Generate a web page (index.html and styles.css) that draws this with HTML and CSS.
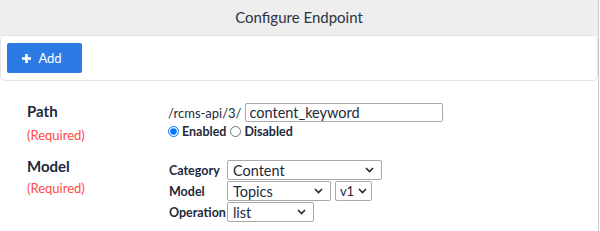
FILE: index.html
```html
<!DOCTYPE html>
<html lang="en">
<head>
<meta charset="UTF-8">
<title>Configure Endpoint</title>
<link rel="stylesheet" href="styles.css">
</head>
<body>

<div class="panel">
    <div class="panel-header">Configure Endpoint</div>

    <div class="toolbar">
        <button class="btn-add">
            <svg width="11" height="11" viewBox="0 0 11 11"><path d="M5.5 1v9M1 5.5h9" stroke="#fff" stroke-width="2.6"/></svg>
            Add
        </button>
    </div>

    <div class="form">
        <div class="form-row row-path">
            <div class="field-label">
                <div class="label-title">Path</div>
                <div class="label-required">(Required)</div>
            </div>
            <div class="field-body">
                <div class="path-line">
                    <span class="path-prefix">/rcms-api/3/</span>
                    <input class="text-input" type="text" value="content_keyword">
                </div>
                <div class="radio-line">
                    <label><input type="radio" name="status" checked> Enabled</label>
                    <label><input type="radio" name="status"> Disabled</label>
                </div>
            </div>
        </div>

        <div class="form-row row-model">
            <div class="field-label">
                <div class="label-title">Model</div>
                <div class="label-required">(Required)</div>
            </div>
            <div class="field-body">
                <table class="model-table">
                    <tr>
                        <th>Category</th>
                        <td>
                            <div class="select-wrap w-category">
                                <select><option>Content</option></select>
                                <svg class="chevron" width="9" height="6" viewBox="0 0 9 6"><path d="M1 1l3.5 3.5L8 1" fill="none" stroke="#1e2a3b" stroke-width="1.6"/></svg>
                            </div>
                        </td>
                    </tr>
                    <tr>
                        <th>Model</th>
                        <td>
                            <div class="select-wrap w-model">
                                <select><option>Topics</option></select>
                                <svg class="chevron" width="9" height="6" viewBox="0 0 9 6"><path d="M1 1l3.5 3.5L8 1" fill="none" stroke="#1e2a3b" stroke-width="1.6"/></svg>
                            </div>
                            <div class="select-wrap w-version">
                                <select><option>v1</option></select>
                                <svg class="chevron" width="9" height="6" viewBox="0 0 9 6"><path d="M1 1l3.5 3.5L8 1" fill="none" stroke="#1e2a3b" stroke-width="1.6"/></svg>
                            </div>
                        </td>
                    </tr>
                    <tr>
                        <th>Operation</th>
                        <td>
                            <div class="select-wrap w-operation">
                                <select><option>list</option></select>
                                <svg class="chevron" width="9" height="6" viewBox="0 0 9 6"><path d="M1 1l3.5 3.5L8 1" fill="none" stroke="#1e2a3b" stroke-width="1.6"/></svg>
                            </div>
                        </td>
                    </tr>
                </table>
            </div>
        </div>
    </div>
</div>

</body>
</html>
```

FILE: styles.css
```css
html {
    box-sizing: border-box;
}

*, *:before, *:after {
    box-sizing: inherit;
}

body {
    margin: 0;
    background: #fff;
    color: #1e2a3b;
    font: 13px 'Lato', sans-serif;
}

.panel {
    width: 599px;
    height: 231px;
    border-right: 1px solid #c9c9c9;
}

.panel-header {
    height: 36px;
    background: #eeeeee;
    text-align: center;
    line-height: 35px;
    font-size: 15px;
    color: #2b3344;
}

.toolbar {
    margin-top: -1px;
    height: 46px;
    border: 1px solid #e4e4e4;
    border-radius: 5px;
    background: #fff;
    padding: 7px 6px;
}

.btn-add {
    display: flex;
    align-items: center;
    justify-content: center;
    gap: 6px;
    width: 75px;
    height: 30px;
    border: none;
    border-radius: 2px;
    background: #2c7be5;
    color: #fff;
    font: 13px 'Lato', sans-serif;
    padding: 0 6px 0 0;
}

.form {
    padding: 19px 0 0 27px;
}

.form-row {
    display: flex;
}

.field-label {
    width: 141px;
}

.label-title {
    font-size: 15px;
    font-weight: bold;
    line-height: 18px;
}

.label-required {
    margin-top: 7px;
    font-size: 13px;
    color: #ff4a4a;
}

.row-path .field-label {
    padding-top: 2px;
}

.path-line {
    display: flex;
    align-items: center;
    height: 22px;
    padding-top: 3px;
}

.path-prefix {
    font-size: 13px;
    margin-right: 3px;
}

.text-input {
    width: 198px;
    height: 19px;
    border: 1px solid #a9a9a9;
    border-radius: 2px;
    padding: 0 4px;
    font: 14.5px 'Lato', sans-serif;
    color: #1e2a3b;
}

.radio-line {
    display: flex;
    height: 16px;
    align-items: center;
    margin-top: 1px;
    font-weight: bold;
    font-size: 12.5px;
}

.radio-line label {
    display: flex;
    align-items: center;
}

.radio-line input {
    margin: 0 3px 0 0;
    width: 11px;
    height: 11px;
}

.radio-line label + label {
    margin-left: 4px;
}

.row-model {
    margin-top: 14px;
}

.row-model .label-required {
    margin-top: 5px;
}

.row-model .field-body {
    padding-top: 3px;
}

.model-table {
    border-collapse: collapse;
    margin-left: 1px;
}

.model-table th {
    text-align: left;
    font-weight: bold;
    font-size: 12.5px;
    padding: 0 1px 1px 0;
    white-space: nowrap;
}

.model-table td {
    padding: 0 0 1px 0;
    display: flex;
    gap: 4px;
}

.select-wrap {
    position: relative;
    height: 20px;
}

.select-wrap select {
    appearance: none;
    -webkit-appearance: none;
    width: 100%;
    height: 20px;
    border: 1px solid #a9a9a9;
    border-radius: 2px;
    background: #fff;
    padding: 0 4px 0 5px;
    font: 14.5px 'Lato', sans-serif;
    color: #1e2a3b;
}

.select-wrap .chevron {
    position: absolute;
    right: 8px;
    top: 7px;
    pointer-events: none;
}

.w-version select {
    padding-left: 4px;
    font-size: 13px;
}

.w-version .chevron {
    right: 5px;
}

.w-category { width: 155px; }
.w-model { width: 104px; }
.w-version { width: 37px; }
.w-operation { width: 87px; }
```
